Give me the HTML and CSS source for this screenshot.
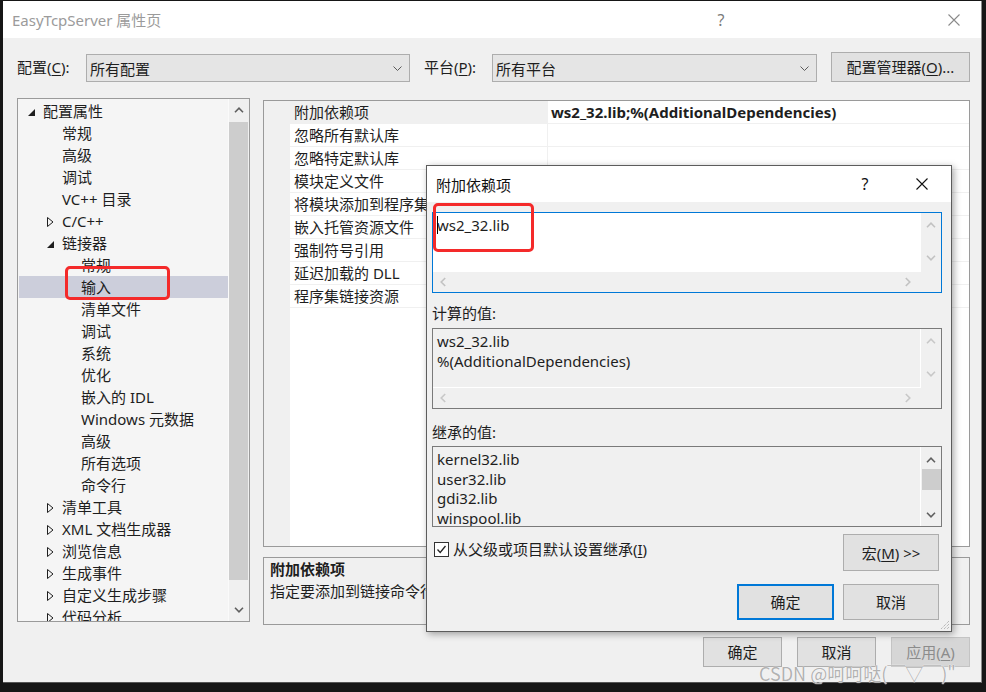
FILE: index.html
```html
<!DOCTYPE html>
<html lang="zh-CN">
<head>
<meta charset="utf-8">
<title>EasyTcpServer 属性页</title>
<link rel="stylesheet" href="styles.css">
</head>
<body>
<div class="screen">
  <div class="window">
    <div class="titlebar">
      <span class="title">EasyTcpServer 属性页</span>
      <span class="cap help">?</span>
      <span class="cap close"><svg width="12" height="12" viewBox="0 0 12 12"><path d="M0.5 0.5 L11.5 11.5 M11.5 0.5 L0.5 11.5" fill="none" stroke="#8a8a8a" stroke-width="1.1"/></svg></span>
    </div>

    <div class="toolbar">
      <span class="tlabel l1">配置(<u>C</u>):</span>
      <div class="combo c1"><span>所有配置</span><svg class="chev" width="9" height="5" viewBox="0 0 9 5"><path d="M0.5 0.5 L4.5 4.5 L8.5 0.5" fill="none" stroke="#5a5a5a"/></svg></div>
      <span class="tlabel l2">平台(<u>P</u>):</span>
      <div class="combo c2"><span>所有平台</span><svg class="chev" width="9" height="5" viewBox="0 0 9 5"><path d="M0.5 0.5 L4.5 4.5 L8.5 0.5" fill="none" stroke="#5a5a5a"/></svg></div>
      <div class="btn cfgmgr">配置管理器(<u>O</u>)...</div>
    </div>

    <div class="main">
      <div class="tree">
        <div class="tree-list">
          <div class="row lv0"><span class="tw"><svg width="7" height="7" viewBox="0 0 7 7"><path d="M7 0 L7 7 L0 7 Z" fill="#1e1e1e"/></svg></span><span>配置属性</span></div>
          <div class="row lv1"><span class="tw"></span><span>常规</span></div>
          <div class="row lv1"><span class="tw"></span><span>高级</span></div>
          <div class="row lv1"><span class="tw"></span><span>调试</span></div>
          <div class="row lv1"><span class="tw"></span><span>VC++ 目录</span></div>
          <div class="row lv1"><span class="tw"><svg width="7" height="10" viewBox="0 0 7 10"><path d="M0.5 0.5 L6 5 L0.5 9.5 Z" fill="none" stroke="#1e1e1e"/></svg></span><span>C/C++</span></div>
          <div class="row lv1"><span class="tw"><svg width="7" height="7" viewBox="0 0 7 7"><path d="M7 0 L7 7 L0 7 Z" fill="#1e1e1e"/></svg></span><span>链接器</span></div>
          <div class="row lv2"><span class="tw"></span><span>常规</span></div>
          <div class="row lv2 sel"><span class="tw"></span><span>输入</span></div>
          <div class="row lv2"><span class="tw"></span><span>清单文件</span></div>
          <div class="row lv2"><span class="tw"></span><span>调试</span></div>
          <div class="row lv2"><span class="tw"></span><span>系统</span></div>
          <div class="row lv2"><span class="tw"></span><span>优化</span></div>
          <div class="row lv2"><span class="tw"></span><span>嵌入的 IDL</span></div>
          <div class="row lv2"><span class="tw"></span><span>Windows 元数据</span></div>
          <div class="row lv2"><span class="tw"></span><span>高级</span></div>
          <div class="row lv2"><span class="tw"></span><span>所有选项</span></div>
          <div class="row lv2"><span class="tw"></span><span>命令行</span></div>
          <div class="row lv1"><span class="tw"><svg width="7" height="10" viewBox="0 0 7 10"><path d="M0.5 0.5 L6 5 L0.5 9.5 Z" fill="none" stroke="#1e1e1e"/></svg></span><span>清单工具</span></div>
          <div class="row lv1"><span class="tw"><svg width="7" height="10" viewBox="0 0 7 10"><path d="M0.5 0.5 L6 5 L0.5 9.5 Z" fill="none" stroke="#1e1e1e"/></svg></span><span>XML 文档生成器</span></div>
          <div class="row lv1"><span class="tw"><svg width="7" height="10" viewBox="0 0 7 10"><path d="M0.5 0.5 L6 5 L0.5 9.5 Z" fill="none" stroke="#1e1e1e"/></svg></span><span>浏览信息</span></div>
          <div class="row lv1"><span class="tw"><svg width="7" height="10" viewBox="0 0 7 10"><path d="M0.5 0.5 L6 5 L0.5 9.5 Z" fill="none" stroke="#1e1e1e"/></svg></span><span>生成事件</span></div>
          <div class="row lv1"><span class="tw"><svg width="7" height="10" viewBox="0 0 7 10"><path d="M0.5 0.5 L6 5 L0.5 9.5 Z" fill="none" stroke="#1e1e1e"/></svg></span><span>自定义生成步骤</span></div>
          <div class="row lv1"><span class="tw"><svg width="7" height="10" viewBox="0 0 7 10"><path d="M0.5 0.5 L6 5 L0.5 9.5 Z" fill="none" stroke="#1e1e1e"/></svg></span><span>代码分析</span></div>
        </div>
        <div class="vscroll">
          <div class="sarrow"><svg width="10" height="6" viewBox="0 0 10 6"><path d="M1 5.2 L5 1.2 L9 5.2" fill="none" stroke="#606060" stroke-width="1.6"/></svg></div>
          <div class="sthumb"></div>
          <div class="sfill"></div>
          <div class="sarrow dn"><svg width="10" height="6" viewBox="0 0 10 6"><path d="M1 0.8 L5 4.8 L9 0.8" fill="none" stroke="#606060" stroke-width="1.6"/></svg></div>
        </div>
      </div>

      <div class="right">
        <div class="grid">
          <div class="prow cur"><span class="pname">附加依赖项</span><span class="pval">ws2_32.lib;%(AdditionalDependencies)</span></div>
          <div class="prow"><span class="pname">忽略所有默认库</span><span class="pval"></span></div>
          <div class="prow"><span class="pname">忽略特定默认库</span><span class="pval"></span></div>
          <div class="prow"><span class="pname">模块定义文件</span><span class="pval"></span></div>
          <div class="prow"><span class="pname">将模块添加到程序集</span><span class="pval"></span></div>
          <div class="prow"><span class="pname">嵌入托管资源文件</span><span class="pval"></span></div>
          <div class="prow"><span class="pname">强制符号引用</span><span class="pval"></span></div>
          <div class="prow"><span class="pname">延迟加载的 DLL</span><span class="pval"></span></div>
          <div class="prow"><span class="pname">程序集链接资源</span><span class="pval"></span></div>
          <div class="gfill"><span class="gmargin"></span><span class="gblank"></span></div>
        </div>
        <div class="desc">
          <div class="dtitle">附加依赖项</div>
          <div class="dtext">指定要添加到链接命令行的附加项。例如 kernel32.lib</div>
        </div>
      </div>
    </div>

    <div class="footer">
      <div class="btn fbtn">确定</div>
      <div class="btn fbtn">取消</div>
      <div class="btn fbtn off">应用(<u>A</u>)</div>
    </div>
  </div>

  <div class="dialog">
    <div class="dlg-title">
      <span class="title">附加依赖项</span>
      <span class="dcap help">?</span>
      <span class="dcap close"><svg width="12" height="12" viewBox="0 0 12 12"><path d="M0.5 0.5 L11.5 11.5 M11.5 0.5 L0.5 11.5" fill="none" stroke="#111" stroke-width="1.1"/></svg></span>
    </div>
    <div class="dlg-body">
      <div class="box editbox">
        <div class="area white"><span class="caret"></span>ws2_32.lib</div>
        <div class="vs"><svg width="10" height="6" viewBox="0 0 10 6"><path d="M1 5.2 L5 1.2 L9 5.2" fill="none" stroke="#c2c2c2" stroke-width="1.6"/></svg><svg width="10" height="6" viewBox="0 0 10 6"><path d="M1 0.8 L5 4.8 L9 0.8" fill="none" stroke="#c2c2c2" stroke-width="1.6"/></svg></div>
        <div class="hs"><svg width="6" height="10" viewBox="0 0 6 10"><path d="M5.2 1 L1.2 5 L5.2 9" fill="none" stroke="#c2c2c2" stroke-width="1.6"/></svg><svg width="6" height="10" viewBox="0 0 6 10"><path d="M0.8 1 L4.8 5 L0.8 9" fill="none" stroke="#c2c2c2" stroke-width="1.6"/></svg></div>
        <div class="corner"></div>
      </div>

      <div class="dlabel first">计算的值:</div>
      <div class="box calcbox">
        <div class="area gray">ws2_32.lib<br>%(AdditionalDependencies)</div>
        <div class="vs"><svg width="10" height="6" viewBox="0 0 10 6"><path d="M1 5.2 L5 1.2 L9 5.2" fill="none" stroke="#c8c8c8" stroke-width="1.6"/></svg><svg width="10" height="6" viewBox="0 0 10 6"><path d="M1 0.8 L5 4.8 L9 0.8" fill="none" stroke="#c8c8c8" stroke-width="1.6"/></svg></div>
        <div class="hs"><svg width="6" height="10" viewBox="0 0 6 10"><path d="M5.2 1 L1.2 5 L5.2 9" fill="none" stroke="#c8c8c8" stroke-width="1.6"/></svg><svg width="6" height="10" viewBox="0 0 6 10"><path d="M0.8 1 L4.8 5 L0.8 9" fill="none" stroke="#c8c8c8" stroke-width="1.6"/></svg></div>
        <div class="corner"></div>
      </div>

      <div class="dlabel second">继承的值:</div>
      <div class="box inhbox">
        <div class="area gray">kernel32.lib<br>user32.lib<br>gdi32.lib<br>winspool.lib<br>comdlg32.lib</div>
        <div class="vs dark">
          <svg width="10" height="6" viewBox="0 0 10 6"><path d="M1 5.2 L5 1.2 L9 5.2" fill="none" stroke="#606060" stroke-width="1.6"/></svg>
          <span class="ithumb"></span>
          <span class="ifill"></span>
          <svg width="10" height="6" viewBox="0 0 10 6"><path d="M1 0.8 L5 4.8 L9 0.8" fill="none" stroke="#606060" stroke-width="1.6"/></svg>
        </div>
      </div>

      <div class="actrow">
        <div class="chk">
          <span class="cbox"><svg width="13" height="13" viewBox="0 0 13 13"><path d="M2.5 6.5 L5.2 9.5 L10.5 3" fill="none" stroke="#222" stroke-width="1.3"/></svg></span>
          <span>从父级或项目默认设置继承(<u>I</u>)</span>
        </div>
        <div class="btn macro">宏(<u>M</u>) &gt;&gt;</div>
      </div>

      <div class="okrow">
        <div class="btn dbtn def">确定</div>
        <div class="btn dbtn">取消</div>
      </div>
    </div>
    <svg class="grip" width="11" height="11" viewBox="0 0 11 11"><path d="M10 2 L2 10 M10 5 L5 10 M10 8 L8 10" stroke="#a0a0a0" stroke-width="1" stroke-dasharray="1 1"/></svg>
  </div>

  <div class="mark mark-tree"></div>
  <div class="mark mark-edit"></div>
  <div class="watermark">CSDN @呵呵哒(￣▽￣)"</div>
</div>
</body>
</html>
```

FILE: styles.css
```css
* { box-sizing: border-box; margin: 0; padding: 0; }

html, body {
  width: 986px;
  height: 692px;
  overflow: hidden;
  background: #161616;
}

body {
  font-family: "Noto Sans", "Noto Sans CJK SC", sans-serif;
  font-size: 15px;
  color: #1e1e1e;
}

u { text-decoration: underline; text-underline-offset: 2px; }

.screen {
  position: relative;
  width: 986px;
  height: 692px;
  padding: 1px 0 0 3px;
}

.window {
  width: 979px;
  height: 682px;
  background: #f0f0f0;
  display: flex;
  flex-direction: column;
  border-right: 1px solid #8a8a8a;
  border-bottom: 1px solid #555;
}

/* ---------- title bar ---------- */
.titlebar {
  height: 37px;
  background: #fff;
  display: flex;
  align-items: center;
  padding-left: 9px;
  padding-right: 4px;
  color: #9b9b9b;
  flex: none;
}
.titlebar .title { flex: 1; font-size: 15px; }
.cap {
  width: 46px;
  display: flex;
  justify-content: center;
  align-items: center;
  height: 37px;
}
.cap.help { font-size: 16px; color: #7a7a7a; margin-right: 187px; }

/* ---------- toolbar ---------- */
.toolbar {
  margin-top: 14px;
  height: 30px;
  display: flex;
  align-items: center;
  padding-left: 14px;
  flex: none;
}
.tlabel { line-height: 20px; }
.tlabel.l1 { width: 69px; }
.tlabel.l2 { width: 68px; margin-left: 14px; }

.combo {
  height: 28px;
  margin-top: 2px;
  background: #e5e5e5;
  border: 1px solid #adadad;
  display: flex;
  align-items: center;
  justify-content: space-between;
  padding: 0 7px 0 3px;
}
.combo.c1 { width: 324px; }
.combo.c2 { width: 325px; }
.combo .chev { margin-top: 1px; }

.btn {
  background: #e1e1e1;
  border: 1px solid #adadad;
  display: flex;
  align-items: center;
  justify-content: center;
  line-height: 20px;
}
.cfgmgr { width: 139px; height: 30px; margin-left: 14px; }

/* ---------- main area ---------- */
.main {
  margin-top: 16px;
  display: flex;
  gap: 13px;
  padding-left: 14px;
  height: 527px;
  flex: none;
}

.tree {
  width: 233px;
  height: 524px;
  border: 1px solid #9a9a9a;
  background: #f5f5f5;
  display: flex;
  overflow: hidden;
}
.tree-list {
  width: 210px;
  padding-top: 1px;
  overflow: hidden;
}
.row {
  height: 22px;
  display: flex;
  align-items: center;
  white-space: nowrap;
  line-height: 22px;
  margin-left: 1px;
}
.row .tw {
  width: 15px;
  flex: none;
  display: flex;
  align-items: center;
}
.row .tw svg { margin-top: 2px; }
.row.lv0 { padding-left: 9px; }
.row.lv1 { padding-left: 28px; }
.row.lv2 { padding-left: 47px; }
.row.sel { background: #cccedb; }

.vscroll {
  width: 21px;
  background: #f0f0f0;
  display: flex;
  flex-direction: column;
  border-left: 1px solid #fafafa;
}
.sarrow {
  height: 22px;
  display: flex;
  justify-content: center;
  align-items: center;
}
.sthumb {
  height: 458px;
  margin: 1px 1px 0 0;
  background: #cdcdcd;
}
.sfill { flex: 1; }

/* ---------- property grid ---------- */
.right {
  width: 707px;
  margin-top: 2px;
  display: flex;
  flex-direction: column;
}
.grid {
  height: 447px;
  border: 1px solid #9a9a9a;
  background: #fff;
  display: flex;
  flex-direction: column;
}
.prow {
  height: 23px;
  display: flex;
  border-left: 26px solid #f0f0f0;
  border-bottom: 1px solid #f0f0f0;
  line-height: 22px;
}
.pname {
  width: 258px;
  padding-left: 4px;
  border-right: 1px solid #f0f0f0;
  white-space: nowrap;
  overflow: hidden;
}
.pval {
  flex: 1;
  padding-left: 3px;
  font-weight: bold;
  white-space: nowrap;
}
.prow.cur .pname { background: #f0f0f0; }
.gfill { flex: 1; display: flex; }
.gmargin { width: 26px; background: #f0f0f0; }
.gblank { flex: 1; }

.desc {
  margin-top: 10px;
  height: 68px;
  border: 1px solid #9a9a9a;
  background: #f0f0f0;
  padding: 0 0 0 6px;
  line-height: 22px;
  white-space: nowrap;
  overflow: hidden;
}
.dtitle { font-weight: bold; }

/* ---------- footer ---------- */
.footer {
  margin-top: 12px;
  display: flex;
  justify-content: flex-end;
  gap: 15px;
  padding-right: 11px;
}
.fbtn { width: 79px; height: 30px; }
.fbtn.off { background: #d6d6d6; border-color: #c4c4c4; color: #8c8c8c; }

/* ---------- dialog ---------- */
.dialog {
  position: absolute;
  left: 426px;
  top: 165px;
  width: 526px;
  height: 467px;
  background: #f0f0f0;
  border: 1px solid #5c5c5c;
  box-shadow: 2px 2px 7px rgba(0, 0, 0, 0.35);
  display: flex;
  flex-direction: column;
}
.dlg-title {
  height: 36px;
  background: #fff;
  display: flex;
  align-items: center;
  padding-left: 9px;
  padding-right: 6px;
  flex: none;
}
.dlg-title .title { flex: 1; color: #111; }
.dcap {
  display: flex;
  justify-content: center;
  align-items: center;
  height: 36px;
}
.dcap.help { width: 30px; margin-right: 19px; font-size: 16px; color: #111; }
.dcap.close { width: 46px; }

.dlg-body {
  padding: 10px 0 0 5px;
  display: flex;
  flex-direction: column;
}

.box {
  width: 510px;
  height: 81px;
  display: grid;
  grid-template-columns: 1fr 20px;
  grid-template-rows: 1fr 20px;
  background: #f0f0f0;
  overflow: hidden;
}
.editbox { border: 1px solid #0078d7; }
.calcbox, .inhbox { border: 1px solid #7a7a7a; }
.inhbox { grid-template-rows: 1fr; }

.area {
  padding: 2px 0 0 4px;
  line-height: 20px;
  white-space: nowrap;
  overflow: hidden;
  position: relative;
}
.area.white { background: #fff; }
.calcbox .area, .inhbox .area {
  border-right: 1px solid #fff;
  padding-top: 2px;
}
.calcbox .area { border-bottom: 1px solid #fff; }
.inhbox .area { padding-top: 3px; line-height: 19.7px; }

.caret {
  position: absolute;
  left: 4px;
  top: 3px;
  width: 1px;
  height: 18px;
  background: #000;
}

.vs {
  display: flex;
  flex-direction: column;
  align-items: center;
  justify-content: space-between;
  padding: 9px 0 11px;
}
.vs.dark {
  padding: 10px 0 8px;
  justify-content: flex-start;
}
.ithumb {
  width: 19px;
  height: 21px;
  margin-top: 6px;
  background: #cdcdcd;
}
.ifill { flex: 1; }
.hs {
  display: flex;
  align-items: center;
  justify-content: space-between;
  padding: 0 10px 0 7px;
}
.corner { background: #f0f0f0; }

.dlabel { line-height: 20px; }
.dlabel.first { margin-top: 10px; margin-bottom: 5px; }
.dlabel.second { margin-top: 13px; margin-bottom: 4px; }

.actrow {
  margin-top: 7px;
  width: 510px;
  display: flex;
  justify-content: space-between;
  align-items: flex-start;
}
.chk {
  display: flex;
  align-items: center;
  gap: 4px;
  margin-top: 5px;
  margin-left: 2px;
  line-height: 20px;
}
.cbox {
  width: 15px;
  height: 15px;
  border: 1px solid #333;
  background: #fff;
  display: flex;
  align-items: center;
  justify-content: center;
}
.macro { width: 96px; height: 37px; margin-right: 3px; }

.okrow {
  margin-top: 13px;
  width: 510px;
  display: flex;
  justify-content: flex-end;
  gap: 9px;
  padding-right: 3px;
}
.dbtn { width: 96px; height: 36px; }
.dbtn.def { width: 97px; border: 2px solid #0078d7; }

.grip {
  position: absolute;
  right: 1px;
  bottom: 1px;
}

/* ---------- annotations ---------- */
.mark {
  position: absolute;
  border: 3px solid #f42a2a;
  border-radius: 5px;
}
.mark-tree { left: 65px; top: 266px; width: 105px; height: 34px; }
.mark-edit { left: 433px; top: 203px; width: 101px; height: 49px; }

.watermark {
  position: absolute;
  left: 759px;
  top: 661px;
  font-family: "Noto Sans CJK SC", sans-serif;
  font-size: 18px;
  line-height: 24px;
  color: #b2b2b2;
  white-space: nowrap;
  text-shadow: 0 0 1px #fff, 0 0 1px #fff;
}
```
